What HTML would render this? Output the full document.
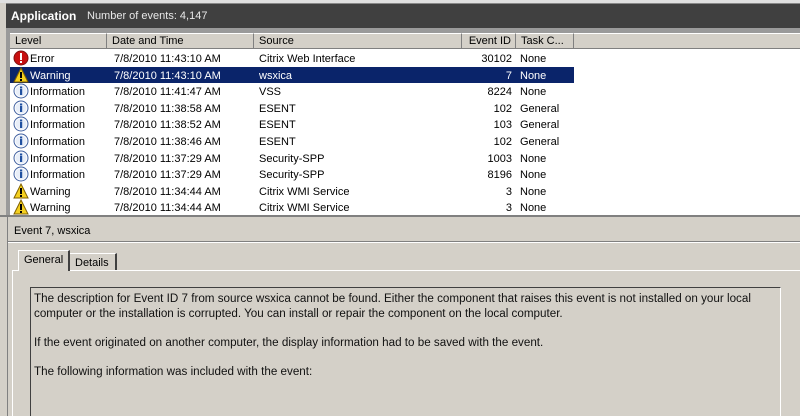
<!DOCTYPE html>
<html><head><meta charset="utf-8"><style>
*{margin:0;padding:0;box-sizing:border-box}
html,body{width:800px;height:416px;overflow:hidden}
body{background:#d4d0c8;font-family:"Liberation Sans",sans-serif;font-size:11px;color:#000;position:relative}
.abs{position:absolute}
#title{left:6px;top:3px;width:794px;height:25px;background:#404040;color:#fff;border-top:1px solid #888}
#title b{position:absolute;left:5px;top:5px;font-size:12px}
#title span{position:absolute;left:81px;top:6px;font-size:11px;color:#e8e8e8}
#frame{left:6px;top:28px;width:794px;height:188px;background:#9a9a9a}
#list{left:10px;top:33px;width:790px;height:182px;background:#fff;overflow:hidden}
.hdr{position:absolute;top:0;height:16px;background:#d4d0c8;border-right:1px solid #808080;border-bottom:1px solid #808080;border-top:1px solid #fff;padding:1px 0 0 5px;white-space:nowrap}
.row{position:absolute;left:0;width:564px;height:16.6px;white-space:nowrap}
.row.sel{background:#0a246a;color:#fff}
.c{position:absolute;top:3px}
.ic{position:absolute;left:3px;top:0;width:16px;height:16px}
#sep{left:0;top:215px;width:800px;height:2px;background:#808080}
#dtitle{left:14px;top:225px}
#dline{left:8px;top:241px;width:792px;height:2px;border-top:1px solid #808080;border-bottom:1px solid #fff}
.tab{position:absolute;background:#d4d0c8;border:1px solid #fff;border-right:2px solid #404040;border-bottom:none;padding:3px 4px 0 5px}
#cont{left:12px;top:270px;width:788px;height:146px;border-top:1px solid #fff;border-left:1px solid #fff}
#box{left:30px;top:287px;width:751px;height:129px;border-top:1px solid #404040;border-left:1px solid #404040;border-right:1px solid #fff;padding:3px 0 0 3px;font-family:"Liberation Sans",sans-serif;font-size:11.65px;line-height:15px;color:#111}
#box p{margin-bottom:14px;max-width:730px}
</style></head><body>
<div class="abs" style="left:0;top:0;width:800px;height:3px;background:#e0e0e0"></div>
<div id="title" class="abs"><b>Application</b><span>Number of events: 4,147</span></div>
<div id="frame" class="abs"></div>
<div id="list" class="abs">
<div class="hdr" style="left:0;width:97px">Level</div>
<div class="hdr" style="left:97px;width:147px">Date and Time</div>
<div class="hdr" style="left:244px;width:208px">Source</div>
<div class="hdr" style="left:452px;width:54px;text-align:right;padding-right:4px">Event ID</div>
<div class="hdr" style="left:506px;width:58px">Task C...</div>
<div class="hdr" style="left:564px;width:226px;border-right:none"></div>
</div>
<svg width="0" height="0" style="position:absolute"><defs>
<g id="err"><circle cx="8" cy="8" r="7" fill="#c81010" stroke="#801010"/><rect x="7" y="3" width="2" height="7" fill="#fff"/><rect x="7" y="11" width="2" height="2" fill="#fff"/></g>
<g id="warn"><path d="M8 1L15 15H1Z" fill="#f5d020" stroke="#806000"/><rect x="7" y="5" width="2" height="6" fill="#000"/><rect x="7" y="12" width="2" height="2" fill="#000"/></g>
<g id="info"><circle cx="8" cy="8" r="7" fill="#fff" stroke="#4060a0"/><circle cx="8" cy="8" r="5.5" fill="#e8eef8"/><rect x="7" y="6" width="2.2" height="6" fill="#2050a0"/><rect x="7" y="3.5" width="2.2" height="2" fill="#2050a0"/></g>
</defs></svg>
<div id="rows" class="abs" style="left:10px;top:50px;width:790px;height:165px;overflow:hidden"></div>
<script>
var d=[["err","Error","7/8/2010 11:43:10 AM","Citrix Web Interface","30102","None"],
["warn","Warning","7/8/2010 11:43:10 AM","wsxica","7","None"],
["info","Information","7/8/2010 11:41:47 AM","VSS","8224","None"],
["info","Information","7/8/2010 11:38:58 AM","ESENT","102","General"],
["info","Information","7/8/2010 11:38:52 AM","ESENT","103","General"],
["info","Information","7/8/2010 11:38:46 AM","ESENT","102","General"],
["info","Information","7/8/2010 11:37:29 AM","Security-SPP","1003","None"],
["info","Information","7/8/2010 11:37:29 AM","Security-SPP","8196","None"],
["warn","Warning","7/8/2010 11:34:44 AM","Citrix WMI Service","3","None"],
["warn","Warning","7/8/2010 11:34:44 AM","Citrix WMI Service","3","None"]];
var h="";d.forEach(function(r,i){h+='<div class="row'+(i==1?' sel':'')+'" style="top:'+(i*16.6)+'px"><svg class="ic" viewBox="0 0 16 16"><use href="#'+r[0]+'"/></svg><span class="c" style="left:20px">'+r[1]+'</span><span class="c" style="left:104px">'+r[2]+'</span><span class="c" style="left:249px">'+r[3]+'</span><span class="c" style="left:452px;width:50px;text-align:right">'+r[4]+'</span><span class="c" style="left:510px">'+r[5]+'</span></div>'});
document.getElementById("rows").innerHTML=h;
</script>
<div id="sep" class="abs"></div>
<div class="abs" style="left:0;top:217px;width:8px;height:199px;background:#d4d0c8;border-right:1px solid #808080"></div>
<div id="dtitle" class="abs">Event 7, wsxica</div>
<div id="dline" class="abs"></div>
<div id="cont" class="abs"></div>
<div class="tab" style="left:18px;top:250px;width:52px;height:21px;z-index:2">General</div>
<div class="tab" style="left:70px;top:253px;width:47px;height:17px;border-left:none">Details</div>
<div id="box" class="abs">
<p>The description for Event ID 7 from source wsxica cannot be found. Either the component that raises this event is not installed on your local computer or the installation is corrupted. You can install or repair the component on the local computer.</p>
<p>If the event originated on another computer, the display information had to be saved with the event.</p>
<p>The following information was included with the event:</p>
</div>
</body></html>
